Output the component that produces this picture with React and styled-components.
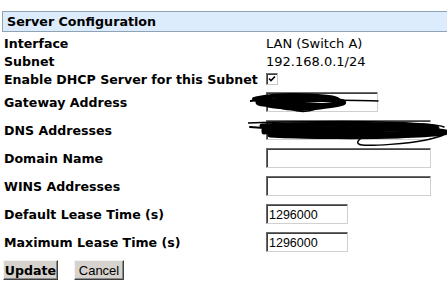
import React from 'react';
import styled, { createGlobalStyle } from 'styled-components';

const GlobalStyle = createGlobalStyle`
  html, body {
    margin: 0;
    padding: 0;
    background: #fff;
    overflow: hidden;
  }
  body {
    font-family: Verdana, "DejaVu Sans", sans-serif;
    font-size: 13px;
    color: #000;
  }
`;

const infoRows = [
  { label: 'Interface', value: 'LAN (Switch A)' },
  { label: 'Subnet', value: '192.168.0.1/24' },
];

const inputRows = [
  { label: 'Gateway Address', width: 112, value: '', scribble: 'gateway' },
  { label: 'DNS Addresses', width: 165, value: '', scribble: 'dns' },
  { label: 'Domain Name', width: 165, value: '' },
  { label: 'WINS Addresses', width: 165, value: '' },
  { label: 'Default Lease Time (s)', width: 82, value: '1296000' },
  { label: 'Maximum Lease Time (s)', width: 82, value: '1296000' },
];

function Scribble({ kind }) {
  if (kind === 'gateway') {
    return (
      <ScribbleSvg $left={-16} $top={-2} width="132" height="24" viewBox="0 0 132 24">
        <g fill="none" stroke="#000" strokeLinecap="round" strokeLinejoin="round">
          <path d="M6 9 C20 6, 40 5, 60 6 S 90 8, 88 12 S 60 16, 30 15 S 8 12, 12 9" strokeWidth="5" />
          <path d="M10 13 C 30 9, 55 8, 80 10 S 92 14, 70 17 S 35 18, 20 14" strokeWidth="5" />
          <path d="M4 9 C 20 12, 50 12, 86 9" strokeWidth="4" />
          <path d="M18 16 C 35 19, 60 19, 82 15" strokeWidth="3" />
          <path d="M40 19 C 48 22, 58 22, 66 19" strokeWidth="1.5" />
          <path d="M60 10 C 85 10, 105 10, 128 11" strokeWidth="1.5" />
          <path d="M0 11 L 10 10" strokeWidth="2" />
        </g>
      </ScribbleSvg>
    );
  }
  return (
    <ScribbleSvg $left={-18} $top={-2} width="200" height="32" viewBox="0 0 200 32">
      <g fill="none" stroke="#000" strokeLinecap="round" strokeLinejoin="round">
        <path d="M0 5 C 40 4, 90 3, 130 4 S 190 6, 196 9" strokeWidth="1.5" />
        <path d="M14 8 C 50 6, 100 6, 150 7 S 190 11, 184 13 S 140 17, 100 16 S 30 15, 16 12" strokeWidth="5" />
        <path d="M16 14 C 50 10, 110 10, 170 12 S 180 17, 150 18 S 60 19, 22 17" strokeWidth="5" />
        <path d="M20 10 C 70 12, 120 13, 180 10" strokeWidth="5" />
        <path d="M30 18 C 70 20, 110 19, 140 17" strokeWidth="3" />
        <path d="M120 18 C 110 20, 106 26, 114 27 S 160 26, 178 22 S 196 17, 198 14" strokeWidth="1.5" />
        <path d="M2 9 L 16 10" strokeWidth="2" />
      </g>
    </ScribbleSvg>
  );
}

function CheckMark() {
  return (
    <svg width="8" height="8" viewBox="0 0 8 8">
      <path d="M1 3.5 L3 5.5 L7 1.5" fill="none" stroke="#000" strokeWidth="1.6" />
    </svg>
  );
}

export default function App() {
  return (
    <>
      <GlobalStyle />
      <Page>
        <Header>Server Configuration</Header>
        <Form>
          {infoRows.map((r) => (
            <Row key={r.label}>
              <Label>{r.label}</Label>
              <Value>{r.value}</Value>
            </Row>
          ))}
          <Row>
            <Label>Enable DHCP Server for this Subnet</Label>
            <Value>
              <CheckBox>
                <CheckMark />
              </CheckBox>
            </Value>
          </Row>
          {inputRows.map((r) => (
            <Row key={r.label} $tall>
              <Label>{r.label}</Label>
              <Value>
                <TextInput $w={r.width} defaultValue={r.value} />
                {r.scribble && <Scribble kind={r.scribble} />}
              </Value>
            </Row>
          ))}
        </Form>
        <Buttons>
          <Button $primary $w={55}>Update</Button>
          <Button $w={50}>Cancel</Button>
        </Buttons>
      </Page>
    </>
  );
}

const Page = styled.div`
  padding-top: 11px;
  width: 447px;
`;

const Header = styled.div`
  margin-left: 2px;
  margin-right: -20px;
  height: 19px;
  line-height: 19px;
  padding-left: 4px;
  background: #dcecfc;
  border: 1px solid #8ea4b6;
  font-weight: bold;
  font-size: 12.7px;
`;

const Form = styled.div`
  display: flex;
  flex-direction: column;
  padding-top: 2px;
  padding-left: 4px;
`;

const Row = styled.div`
  display: flex;
  align-items: center;
  height: ${(p) => (p.$tall ? 28 : 18)}px;
`;

const Label = styled.div`
  width: 262px;
  flex-shrink: 0;
  font-weight: bold;
  font-size: 12.6px;
  white-space: nowrap;
`;

const Value = styled.div`
  position: relative;
  display: flex;
  align-items: center;
  white-space: nowrap;
`;

const CheckBox = styled.span`
  display: inline-flex;
  align-items: center;
  justify-content: center;
  box-sizing: border-box;
  width: 12px;
  height: 12px;
  background: #fff;
  border: 1px solid;
  border-color: #6e6e6e #c8c8c8 #c8c8c8 #6e6e6e;
  box-shadow: inset 1px 1px 0 #3c3c3c;
`;

const TextInput = styled.input.attrs({ type: 'text' })`
  box-sizing: border-box;
  width: ${(p) => p.$w}px;
  height: 20px;
  margin: 0;
  padding: 1px 2px 0;
  background: #fff;
  border: 1px solid;
  border-color: #6a6a6a #d0d0d0 #d0d0d0 #6a6a6a;
  box-shadow: inset 1px 1px 0 #404040;
  font-family: "Liberation Sans", Arial, sans-serif;
  font-size: 12.5px;
  color: #000;
  outline: none;
`;

const ScribbleSvg = styled.svg`
  position: absolute;
  left: ${(p) => p.$left}px;
  top: ${(p) => p.$top}px;
  pointer-events: none;
`;

const Buttons = styled.div`
  display: flex;
  gap: 16px;
  margin-top: 4px;
  padding-left: 3px;
`;

const Button = styled.button`
  box-sizing: border-box;
  width: ${(p) => p.$w}px;
  height: 20px;
  margin: 0;
  padding: 0;
  background: #d6d3ce;
  border: 1px solid;
  border-color: #f4f4f4 #404040 #404040 #f4f4f4;
  box-shadow: inset -1px -1px 0 #8a8a8a;
  color: #000;
  font-family: ${(p) =>
    p.$primary ? 'Verdana, "DejaVu Sans", sans-serif' : '"Liberation Sans", Arial, sans-serif'};
  font-weight: ${(p) => (p.$primary ? 'bold' : 'normal')};
  font-size: ${(p) => (p.$primary ? '12.6px' : '13px')};
`;
